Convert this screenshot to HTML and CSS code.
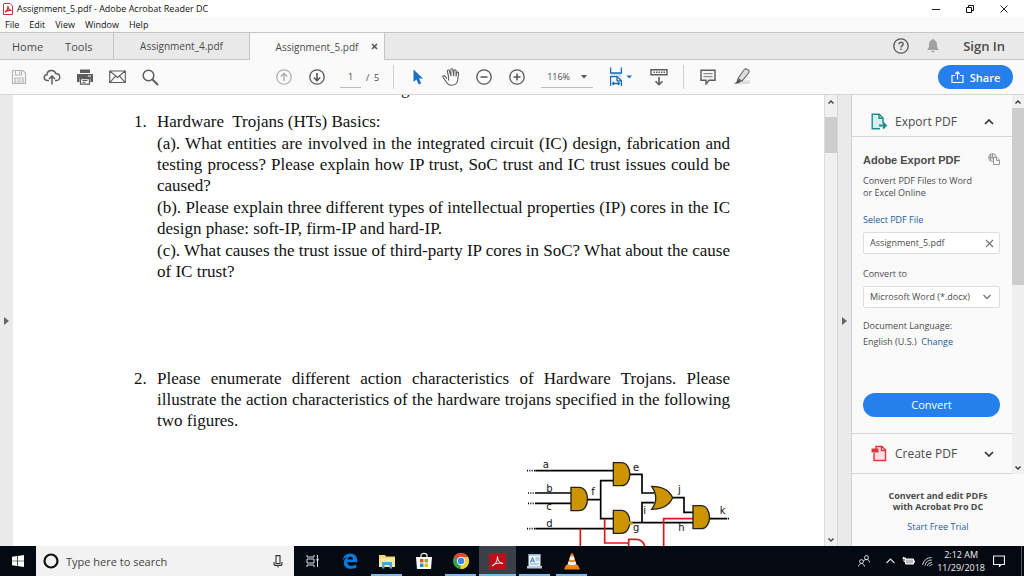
FILE: index.html
```
<!DOCTYPE html>
<html lang="en">
<head>
<meta charset="UTF-8">
<meta name="viewport" content="width=device-width, initial-scale=1.0">
<title>Assignment_5.pdf - Adobe Acrobat Reader DC</title>
<link rel="stylesheet" href="styles.css">
</head>
<body>
    <header class="titlebar">
        <svg class="app-icon" width="10" height="12" viewBox="0 0 10 12"><path d="M1 .5h6L9.500 3v8.500h-9V1z" fill="#fff" stroke="#c8343a"/><path d="M2 9c2-1 3-3 3-6 0 3 1 4 3.500 4.500C6 7 4 7.500 2 9z" fill="none" stroke="#d2232a" stroke-width="1.200"/></svg>
        <span class="title">Assignment_5.pdf - Adobe Acrobat Reader DC</span>
        <div class="window-buttons">
            <button aria-label="Minimize"><svg width="10" height="10" viewBox="0 0 10 10"><path d="M1 5.500h8" stroke="#222"/></svg></button>
            <button aria-label="Restore"><svg width="10" height="10" viewBox="0 0 10 10"><path d="M1.500 3.500h5v5h-5zM3.500 3V1.500h5v5H7" fill="none" stroke="#111"/></svg></button>
            <button aria-label="Close"><svg width="10" height="10" viewBox="0 0 10 10"><path d="M1.500 1.500l7 7M8.500 1.500l-7 7" stroke="#222"/></svg></button>
        </div>
    </header>

    <nav class="menubar">
        <button>File</button>
        <button>Edit</button>
        <button>View</button>
        <button>Window</button>
        <button>Help</button>
    </nav>

    <nav class="tabbar">
        <div class="main-tabs">
            <button>Home</button>
            <button>Tools</button>
        </div>
        <button class="tab">Assignment_4.pdf</button>
        <div class="tab active">
            <span>Assignment_5.pdf</span>
            <button class="tab-close" aria-label="Close tab"><svg width="7" height="7" viewBox="0 0 7 7"><path d="M1 1l5 5M6 1L1 6" stroke="#555" stroke-width="1.600"/></svg></button>
        </div>
        <div class="account">
            <button aria-label="Help"><svg width="16" height="16" viewBox="0 0 16 16"><circle cx="8" cy="8" r="7.200" fill="none" stroke="#555" stroke-width="1.300"/><path d="M6 6.300c0-2.600 4.200-2.600 4.200-.2C10.200 7.700 8 7.600 8 9.500M8 10.600v1.500" fill="none" stroke="#555" stroke-width="1.400"/></svg></button>
            <button aria-label="Notifications"><svg width="14" height="16" viewBox="0 0 14 16"><path d="M7 1c.8 0 1 .6 1 1 2.400.6 3 2.500 3 4.500 0 3 .6 4.200 2 5.500H1c1.400-1.300 2-2.500 2-5.500 0-2 .6-3.900 3-4.500 0-.4.200-1 1-1zM5.200 13h3.600c-.2 1.700-3.400 1.700-3.600 0z" fill="#a0a0a0"/></svg></button>
            <button class="sign-in">Sign In</button>
        </div>
    </nav>

    <div class="toolbar">
        <div class="tools files">
            <button aria-label="Save"><svg width="16" height="16" viewBox="0 0 16 16"><path d="M1.500 1.500h10.500l2.500 2.500v10.500h-13zM4.500 1.500v4.500h6V1.500M8.500 2.500v2.500M4 14.500V9h8v5.500M5.500 11h5M5.500 13h5" fill="none" stroke="#b4b4b4" stroke-width="1.200"/></svg></button>
            <button aria-label="Upload"><svg width="18" height="16" viewBox="0 0 18 16"><path d="M6 11.500H4.500C.2 11.500.2 6 4 5.800 4 .8 11.500-.2 12.700 4.500c5.200 0 5.300 7 .8 7H12" fill="none" stroke="#5c5c5c" stroke-width="1.400"/><path d="M9 15.500V7.500M6 10l3-3 3 3" fill="none" stroke="#5c5c5c" stroke-width="1.500"/></svg></button>
            <button aria-label="Print"><svg width="18" height="16" viewBox="0 0 18 16"><path d="M4 .5h10V4H4zM1 5h16v8h-2.500V9.500h-11V13H1z" fill="#5c5c5c"/><path d="M4.500 9.700h9v5.500h-9z" fill="#fff" stroke="#5c5c5c" stroke-width="1.300"/><path d="M6.500 11.500h5M6.500 13.300h3" stroke="#5c5c5c"/><path d="M12 7h3" stroke="#fff"/></svg></button>
            <button aria-label="Email"><svg width="17" height="14" viewBox="0 0 17 14"><path d="M.7 1h15.600v11.500H.7zM1 1.200l7.500 6.300L16 1.200M1 12.300l5.500-6.200M16 12.300l-5.500-6.200" fill="none" stroke="#5c5c5c" stroke-width="1.100"/></svg></button>
            <button aria-label="Search"><svg width="17" height="17" viewBox="0 0 17 17"><circle cx="6.500" cy="6.500" r="5.300" fill="none" stroke="#5c5c5c" stroke-width="1.500"/><path d="M10.500 10.500l5.500 5.500" stroke="#5c5c5c" stroke-width="2"/></svg></button>
        </div>
        <div class="tools">
            <button aria-label="Previous page"><svg width="16" height="16" viewBox="0 0 16 16"><path d="M8 12V4.500M4.800 7.500L8 4.300l3.200 3.200" fill="none" stroke="#b0b0b0" stroke-width="1.500"/><circle cx="8" cy="8" r="7.200" fill="none" stroke="#b0b0b0" stroke-width="1.300"/></svg></button>
            <button aria-label="Next page"><svg width="16" height="16" viewBox="0 0 16 16"><path d="M8 4v7.500M4.800 8.500L8 11.700l3.200-3.200" fill="none" stroke="#555" stroke-width="1.600"/><circle cx="8" cy="8" r="7.200" fill="none" stroke="#555" stroke-width="1.300"/></svg></button>
        </div>
        <label class="pager"><input type="text" value="1" aria-label="Page number"><span>/&nbsp; 5</span></label>
        <div class="tools divided">
            <button aria-label="Select"><svg width="12" height="16" viewBox="0 0 12 16"><path d="M1.500.5v12.500l3-2.600 2.200 5 2.500-1.200-2.200-4.600h4z" fill="#1a6fc9"/></svg></button>
            <button aria-label="Pan"><svg width="18" height="18" viewBox="0 0 18 18"><path d="M5 10.500L2.800 8.200C1.600 7 .3 8.200 1.200 9.500l4 5.700c1 1.400 2.300 2 4.300 2 3.800 0 5.800-2 6.200-5.200l.9-6.500c.2-1.600-1.700-1.900-2-.4L14 8.500l.1-5.500c0-1.700-2-1.700-2.100 0l-.4 5L11 2c0-1.600-2.200-1.600-2.100 0V8L7.500 3c-.4-1.600-2.400-1.200-2.100.4L6.600 9v3.500" fill="#fff" stroke="#5c5c5c" stroke-width="1.100"/></svg></button>
            <button aria-label="Zoom out"><svg width="16" height="16" viewBox="0 0 16 16"><circle cx="8" cy="8" r="7.200" fill="none" stroke="#555" stroke-width="1.300"/><path d="M4.500 8h7" stroke="#555" stroke-width="1.500"/></svg></button>
            <button aria-label="Zoom in"><svg width="16" height="16" viewBox="0 0 16 16"><circle cx="8" cy="8" r="7.200" fill="none" stroke="#555" stroke-width="1.300"/><path d="M4.500 8h7M8 4.500v7" stroke="#555" stroke-width="1.500"/></svg></button>
        </div>
        <label class="zoom">
            <select aria-label="Zoom level"><option>116%</option></select>
            <svg width="6" height="4" viewBox="0 0 6 4"><path d="M0 0h6L3 3.500z" fill="#555"/></svg>
        </label>
        <button class="fit" aria-label="Fit width"><svg width="24" height="20" viewBox="0 0 24 20"><path d="M2.600 6h10.800v3.600H2.600z" fill="#c5dcf0"/><path d="M2.600.5v5.500h10.800V.5M2.600 19V9.600h6.500l4.300 4V19M9 9.600v4.200h4.400M4.500 16.500h7M6 15l-1.500 1.500L6 18M10 15l1.500 1.500L10 18" fill="none" stroke="#1b6cb8" stroke-width="1.300"/><path d="M18.500 8.500h5.500l-2.750 3z" fill="#1b6cb8"/></svg></button>
        <div class="tools">
            <button aria-label="Scroll mode"><svg width="18" height="18" viewBox="0 0 18 18"><path d="M1 1.700h16v5H1z" fill="#fff" stroke="#5c5c5c" stroke-width="1.400"/><path d="M3.500 4.200h11.500" stroke="#5c5c5c" stroke-width="1.500" stroke-dasharray="1.500 1"/><path d="M9 9v7.500M5.500 13.200L9 16.700l3.500-3.500" fill="none" stroke="#5c5c5c" stroke-width="1.600"/></svg></button>
        </div>
        <div class="tools divided">
            <button aria-label="Comment"><svg width="16" height="16" viewBox="0 0 16 16"><path d="M1 1.200h14v10H9L6 15v-3.800H1z" fill="#f4f4f4" stroke="#5c5c5c" stroke-width="1.400"/><path d="M3.500 4.700h9M3.500 7.700h9" stroke="#777"/></svg></button>
            <button aria-label="Highlight"><svg width="18" height="18" viewBox="0 0 18 18"><path d="M7 12.500h11v3.500H4z" fill="#ddd"/><path d="M14.500 1l2.500 1.500c.5 1-.2 2-.8 3L10 13l-4-2.500L11.500 2.500C12.300 1.200 13.500.6 14.500 1z" fill="#ddd" stroke="#666" stroke-width="1.100"/><path d="M5.500 10.700l4 2.600-3 2-4.500.7 2.500-2.200z" fill="#555"/></svg></button>
        </div>
        <button class="pill share"><svg width="13" height="12" viewBox="0 0 13 12"><path d="M4 4.500H1v7h11v-7H9M6.500 8.500V1M4.300 3l2.200-2.200L8.700 3" fill="none" stroke="#fff" stroke-width="1.200"/></svg>Share</button>
    </div>

    <main class="workspace">
        <button class="gutter" aria-label="Open navigation pane"><svg width="5" height="8" viewBox="0 0 5 8"><path d="M0 0l5 4-5 4z" fill="#666"/></svg></button>

        <article class="page">
            <p class="previous-line">g</p>
            <section class="question">
                <span class="number">1.</span>
                <div class="answer">
                    <p>Hardware&nbsp; Trojans (HTs) Basics:</p>
                    <p>(a). What entities are involved in the integrated circuit (IC) design, fabrication and testing process? Please explain how IP trust, SoC trust and IC trust issues could be caused?</p>
                    <p>(b). Please explain three different types of intellectual properties (IP) cores in the IC design phase: soft-IP, firm-IP and hard-IP.</p>
                    <p>(c). What causes the trust issue of third-party IP cores in SoC? What about the cause of IC trust?</p>
                </div>
            </section>
            <section class="question">
                <span class="number">2.</span>
                <div class="answer">
                    <p>Please enumerate different action characteristics of Hardware Trojans. Please illustrate the action characteristics of the hardware trojans specified in the following two figures.</p>
                </div>
            </section>

            <svg class="circuit" width="210" height="90" viewBox="45 21 630 270">
                <g fill="none" stroke="#000" stroke-width="5">
                    <path d="M76 62H310M78 129H184M78 160H184M76 236H310M232 149H272M310 92H272V206H310M360 73H396V129H432M366 218H550M396 218V158H432M488 143H522V187H550M598 206H652"/>
                    <path d="M51 62H76M54 129H78M54 160H78M51 236H76M654 206H660" stroke-dasharray="3 4"/>
                </g>
                <g fill="none" stroke="#e3131b" stroke-width="5">
                    <path d="M211 236V291M284 206V279H356M461 291V206H550"/>
                    <path d="M356 291V268H378C394 268 402 278 405 291" fill="#fff"/>
                </g>
                <g fill="#cc9400" stroke="#222" stroke-width="4">
                    <path d="M310 38H334C368 38 368 107 334 107H310z"/>
                    <path d="M183 112H207C241 112 241 182 207 182H183z"/>
                    <path d="M310 181H334C368 181 368 250 334 250H310z"/>
                    <path d="M549 167H573C607 167 607 236 573 236H549z"/>
                    <path d="M425 109C459 109 478 121 488 143C478 165 459 178 425 178C441 156 441 132 425 109z"/>
                    <circle cx="362" cy="219" r="4" stroke="#cc9400"/>
                </g>
                <g class="wire-names">
                    <text x="98" y="55">a</text>
                    <text x="109" y="126">b</text>
                    <text x="109" y="179">c</text>
                    <text x="109" y="230">d</text>
                    <text x="369" y="64">e</text>
                    <text x="244" y="136">f</text>
                    <text x="369" y="243">g</text>
                    <text x="505" y="244">h</text>
                    <text x="400" y="193">i</text>
                    <text x="504" y="128">j</text>
                    <text x="629" y="191">k</text>
                </g>
            </svg>
        </article>

        <div class="scrollbar page-scroll">
            <svg width="6" height="4" viewBox="0 0 6 4"><path d="M.5 3.500L3 1l2.500 2.500" fill="none" stroke="#444" stroke-width="1.400"/></svg>
            <div class="thumb"></div>
            <svg width="6" height="4" viewBox="0 0 6 4"><path d="M.5.5L3 3 5.500.5" fill="none" stroke="#444" stroke-width="1.400"/></svg>
        </div>

        <button class="gutter right" aria-label="Hide tools pane"><svg width="5" height="8" viewBox="0 0 5 8"><path d="M0 0l5 4-5 4z" fill="#666"/></svg></button>

        <aside class="panel">
            <div class="panel-top">
                <div class="panel-tools">
                    <button class="tool-header">
                        <svg width="16" height="17" viewBox="0 0 16 17"><path d="M9 15.800H1.200V1.200h7L12 5v5" fill="#d7efee" stroke="#1b8d8b" stroke-width="1.400"/><path d="M8 1.200V5.200h4" fill="none" stroke="#1b8d8b" stroke-width="1.400"/><path d="M8 12.500h6.500M12 9.500l3 3-3 3" fill="none" stroke="#1b8d8b" stroke-width="1.800"/></svg>
                        <span>Export PDF</span>
                        <svg width="10" height="6" viewBox="0 0 10 6"><path d="M1 5l4-4 4 4" fill="none" stroke="#333" stroke-width="1.700"/></svg>
                    </button>
                    <form class="export">
                        <h2>Adobe Export PDF
                            <svg width="12" height="12" viewBox="0 0 12 12"><circle cx="4.500" cy="4.500" r="4" fill="#ddd" stroke="#aaa"/><path d="M2.500 1v7M.5 4.500h5M4.500.5v5" stroke="#999"/><path d="M5.500 4.500h3.500l2.500 2.500v4.500h-6z" fill="#fff" stroke="#999"/><path d="M8.500 4.500V7.500h3" fill="none" stroke="#999"/></svg>
                        </h2>
                        <p class="about">Convert PDF Files to Word<br>or Excel Online</p>
                        <a class="select-file" href="#">Select PDF File</a>
                        <div class="field file">
                            <span>Assignment_5.pdf</span>
                            <button type="button" aria-label="Remove file"><svg width="9" height="9" viewBox="0 0 9 9"><path d="M1 1l7 7M8 1L1 8" stroke="#777" stroke-width="1.200"/></svg></button>
                        </div>
                        <label for="format">Convert to</label>
                        <div class="field">
                            <select id="format"><option>Microsoft Word (*.docx)</option></select>
                            <svg width="8" height="6" viewBox="0 0 8 6"><path d="M.5 1L4 4.500 7.500 1" fill="none" stroke="#777" stroke-width="1.300"/></svg>
                        </div>
                        <p class="language">Document Language:<br>English (U.S.)&nbsp; <a href="#">Change</a></p>
                        <button type="button" class="pill convert">Convert</button>
                    </form>
                    <button class="tool-header create">
                        <svg width="16" height="17" viewBox="0 0 16 17"><path d="M3 8v7.500h11.500V5L11 1.500H5V4" fill="#fbe0e1" stroke="#d9363e" stroke-width="1.400"/><path d="M10.500 1.500v4h4" fill="none" stroke="#d9363e" stroke-width="1.400"/><path d="M.5 3.500h7v4h-7z" fill="#d9363e"/></svg>
                        <span>Create PDF</span>
                        <svg width="10" height="6" viewBox="0 0 10 6"><path d="M1 1l4 4 4-4" fill="none" stroke="#333" stroke-width="1.700"/></svg>
                    </button>
                </div>
                <div class="scrollbar panel-scroll">
                    <svg width="6" height="4" viewBox="0 0 6 4"><path d="M.5 3.500L3 1l2.500 2.500" fill="none" stroke="#333" stroke-width="1.400"/></svg>
                    <div class="thumb"></div>
                    <svg width="6" height="4" viewBox="0 0 6 4"><path d="M.5.5L3 3 5.500.5" fill="none" stroke="#333" stroke-width="1.400"/></svg>
                </div>
            </div>
            <div class="promo">
                <strong>Convert and edit PDFs<br>with Acrobat Pro DC</strong>
                <a href="#">Start Free Trial</a>
            </div>
        </aside>
    </main>

    <footer class="taskbar">
        <button class="start" aria-label="Start"><svg width="12" height="12" viewBox="0 0 12 12"><path d="M0 1.700l5-.7v4.700H0zM5.700.9L12 0v5.700H5.700zM0 6.300h5V11l-5-.7zM5.700 6.300H12V12l-6.300-.9z" fill="#fff"/></svg></button>
        <div class="search">
            <svg width="16" height="16" viewBox="0 0 16 16"><circle cx="8" cy="8" r="6.500" fill="none" stroke="#111" stroke-width="2.200"/></svg>
            <input type="text" placeholder="Type here to search" aria-label="Search">
            <svg width="10" height="13" viewBox="0 0 10 13"><path d="M3 .6h4v8H3zM1 7v1.500c0 1.300.8 2 2 2h4c1.200 0 2-.7 2-2V7M5 10.500v2" fill="none" stroke="#333" stroke-width="1.100"/></svg>
        </div>
        <div class="apps">
            <button aria-label="Task View"><svg width="13" height="12" viewBox="0 0 13 12"><path d="M1 0v2h7V0M1 12v-2h7v2M1 4h7v4H1zM11.500 0v3M11.500 5v7" fill="none" stroke="#ddd"/><path d="M10.500 3.500h2v2h-2z" fill="#fff"/></svg></button>
            <button aria-label="Edge"><svg width="16" height="16" viewBox="0 0 16 16"><path d="M.7 7.500C1.200 3 4.500.5 8.300.5c4.500 0 7 3 7 7v1.800H5.300c.2 4.200 5.200 4.400 9 2.200v3.200c-5.500 2.500-12.500 1-12.500-5C1.800 7 3.500 5 5.800 4 3.800 4.300 1.800 5.500.7 7.500zM5.500 6.500h5.600c0-3.800-5.200-3.800-5.600 0z" fill="#0c79d8"/></svg></button>
            <button class="open" aria-label="File Explorer"><svg width="16" height="15" viewBox="0 0 16 15"><path d="M0 1h6l1 1.500h9V12H0z" fill="#f4d774"/><path d="M0 4h16v9H0z" fill="#fbe79b"/><path d="M3 14.500V8h10v6.500h-2.500V11h-5v3.500z" fill="#46a7dd"/></svg></button>
            <button aria-label="Store"><svg width="18" height="18" viewBox="0 0 18 18"><path d="M6 5V3.500c0-2.800 6-2.800 6 0V5" fill="none" stroke="#eee" stroke-width="1.200"/><path d="M1 5h16l-1 12H2z" fill="#fff"/><path d="M5 7h3.500v3.500H5z" fill="#e8502b"/><path d="M9.500 7H13v3.500H9.500z" fill="#80b928"/><path d="M5 11.500h3.500V15H5z" fill="#159bd8"/><path d="M9.500 11.500H13V15H9.500z" fill="#f5b51c"/></svg></button>
            <button class="open" aria-label="Chrome"><svg width="18" height="18" viewBox="0 0 18 18"><circle cx="9" cy="9" r="8" fill="#32a350"/><path d="M9 9L2 5A8 8 0 0 1 16 5z" fill="#e24436"/><path d="M9 9V5h7A8 8 0 0 1 8.500 17z" fill="#fbcd32"/><circle cx="9" cy="9" r="4.200" fill="#fff"/><circle cx="9" cy="9" r="3.300" fill="#4382ee"/></svg></button>
            <button class="open current" aria-label="Acrobat Reader"><svg width="17" height="17" viewBox="0 0 17 17"><path d="M0 0h17v17H0z" fill="#b9101a"/><path d="M3 13c3.500-1.700 5.500-5 5.500-9.500C8.500 7.500 10.500 10 14 10.500 10 9.300 6 10.500 3 13z" fill="none" stroke="#fff"/></svg></button>
            <button class="open" aria-label="WordPad"><svg width="15" height="16" viewBox="0 0 15 16"><path d="M1.500 1h12v12h-12z" fill="#e9f3fa"/><path d="M1.500 1h12v1.500h-12z" fill="#86b9dc"/><path d="M3.500 9.500l2-5 2 5M4.500 8h2" fill="none" stroke="#356fb0"/><path d="M8.500 5h4M8.500 7h4M3 11h9" stroke="#7ea8cc"/><path d="M0 13h15v2.500H0z" fill="#bccbd8"/></svg></button>
            <button class="open" aria-label="VLC"><svg width="16" height="17" viewBox="0 0 16 17"><path d="M2 12h12l2 4.500H0z" fill="#ef8014"/><path d="M7 .5h2L13 13c-2 1.700-8 1.700-10 0z" fill="#f18a1e"/><path d="M6.200 3.500h3.600l.9 3c-1 .8-4.400.8-5.400 0zM4.600 8.500c1.500 1 5.300 1 6.800 0l.8 2.500c-2 1.300-6.400 1.300-8.400 0z" fill="#f3f3f3"/></svg></button>
        </div>
        <div class="tray">
            <svg width="12" height="12" viewBox="0 0 12 12"><path d="M.6 11.500c0-4 5.800-4 5.800 0M5.500 6.500c.5-3 5.900-3 5.900 1" fill="none" stroke="#ddd"/><circle cx="3.500" cy="6.500" r="1.900" fill="none" stroke="#ddd"/><circle cx="8.500" cy="2.700" r="2" fill="none" stroke="#ddd"/></svg>
            <svg class="more" width="9" height="6" viewBox="0 0 9 6"><path d="M.5 5l4-4 4 4" fill="none" stroke="#ddd" stroke-width="1.200"/></svg>
            <svg width="13" height="10" viewBox="0 0 13 10"><path d="M3.500 3h8v5h-8z" fill="#bbb" stroke="#fff"/><path d="M12.500 4.500v2M.5 2.500h3M1.500 1v1.500M3 1v1.500M2 3v2.500h1.500" fill="none" stroke="#fff"/></svg>
            <svg width="11" height="11" viewBox="0 0 11 11"><path d="M.5 9A9 9 0 0 1 9.500 1.500M3 9.500A7 7 0 0 1 10 4M5 10a5 5 0 0 1 5-3.500M7.500 10.500A3 3 0 0 1 10.500 8.500" fill="none" stroke="#ccc"/></svg>
            <time>2:12 AM<br>11/29/2018</time>
            <svg class="action-center" width="12" height="12" viewBox="0 0 12 12"><path d="M.5 1h11v8.500H8L6.500 11.300V9.500h-6z" fill="none" stroke="#eee" stroke-width="1.200"/></svg>
        </div>
    </footer>
</body>
</html>
```
FILE: styles.css
```
* {
    box-sizing: border-box;
}
html, body {
    height: 100%;
}
body {
    margin: 0;
    display: flex;
    flex-direction: column;
    overflow: hidden;
    font-family: "Open Sans", "Noto Sans", sans-serif;
    font-size: 9px;
    color: #4b4b4b;
    background: #fafafa;
}
button, input, select {
    margin: 0;
    padding: 0;
    border: 0;
    border-radius: 0;
    background: none;
    font: inherit;
    color: inherit;
    appearance: none;
    outline: none;
}
button {
    display: flex;
    align-items: center;
    justify-content: center;
}
svg {
    display: block;
    flex: none;
}
p, h2 {
    margin: 0;
}
a {
    color: #1d5c9c;
    text-decoration: none;
}

/* window chrome */
.titlebar {
    flex: none;
    display: flex;
    align-items: center;
    height: 17px;
    padding: 0 3px;
    background: #fff;
    color: #111;
}
.title {
    margin-left: 4px;
}
.window-buttons {
    display: flex;
    margin-left: auto;
}
.window-buttons button {
    width: 34px;
    height: 16px;
}
.menubar {
    flex: none;
    display: flex;
    gap: 10px;
    height: 15px;
    padding-left: 5px;
    color: #111;
}
.tabbar {
    flex: none;
    display: flex;
    height: 28px;
    background: #e9e9e9;
    border-top: 1px solid #c6c6c6;
    border-bottom: 1px solid #c6c6c6;
    font-size: 10px;
}
.main-tabs {
    display: flex;
    gap: 22px;
    width: 113px;
    padding-left: 12px;
    font-size: 11px;
}
.tab {
    display: flex;
    align-items: center;
    justify-content: center;
    width: 136px;
    border-left: 1px solid #c6c6c6;
}
.tab.active {
    height: 27px;
    gap: 13px;
    padding-left: 20px;
    border-right: 1px solid #c6c6c6;
    background: #fafafa;
}
.account {
    display: flex;
    margin-left: auto;
    padding-right: 19px;
    gap: 17px;
}
.sign-in {
    margin-left: 6px;
    font-size: 13px;
    font-weight: 600;
}

/* toolbar */
.toolbar {
    flex: none;
    display: flex;
    align-items: center;
    height: 35px;
    padding: 0 11px 0 2px;
    border-bottom: 1px solid #d6d6d6;
}
.tools {
    display: flex;
}
.tools button {
    width: 33px;
    height: 24px;
}
.files {
    margin-right: 100px;
}
.divided {
    margin-left: 8px;
    padding-left: 7px;
    border-left: 1px solid #cfcfcf;
}
.pager {
    display: flex;
    align-items: center;
    gap: 5px;
    margin: 0 6px 0 7px;
}
.pager input {
    width: 21px;
    height: 21px;
    border-bottom: 1px solid #c0c0c0;
    text-align: center;
}
.zoom {
    display: flex;
    align-items: center;
    width: 52px;
    height: 21px;
    margin-left: 8px;
    padding: 0 6px;
    border-bottom: 1px solid #c0c0c0;
}
.zoom select {
    flex: 1;
}
.fit {
    margin: 0 10px 0 15px;
}
.pill {
    height: 24px;
    border-radius: 12px;
    background: #2680eb;
    color: #fff;
    font-size: 11px;
}
.share {
    gap: 6px;
    width: 75px;
    margin-left: auto;
    font-weight: 600;
}

/* document */
.workspace {
    flex: 1;
    display: flex;
    min-height: 0;
}
.gutter {
    width: 13px;
    background: #eaeaea;
}
.gutter.right {
    width: 14px;
    border-left: 1px solid #d6d6d6;
}
.page {
    flex: 1;
    overflow: hidden;
    padding: 0 94px 0 121px;
    background: #fff;
    color: #111;
    font-family: "Liberation Serif", serif;
    font-size: 17px;
    line-height: 21px;
}
.previous-line {
    margin: -17px 0 12px;
    padding-left: 267px;
}
.question {
    display: flex;
    margin-bottom: 86px;
}
.number {
    flex: none;
    width: 23px;
}
.answer {
    flex: 1;
    display: grid;
    gap: 1px;
    text-align: justify;
}
.question + .question {
    margin-bottom: 26px;
}
.circuit {
    margin-left: 391px;
}
.wire-names {
    font-family: "DejaVu Sans", sans-serif;
    font-size: 30px;
    fill: #111;
}
.scrollbar {
    flex: none;
    display: flex;
    flex-direction: column;
    align-items: center;
    background: #f0f0f0;
}
.scrollbar .thumb {
    width: 100%;
    margin-bottom: auto;
    background: #cdcdcd;
}
.page-scroll {
    width: 13px;
    padding: 5px 0 4px;
    border-left: 1px solid #dcdcdc;
}
.page-scroll .thumb {
    height: 36px;
    margin-top: 13px;
}

/* tools pane */
.panel {
    flex: none;
    display: flex;
    flex-direction: column;
    width: 173px;
    border-left: 1px solid #d0d0d0;
}
.panel-top {
    display: flex;
}
.panel-tools {
    flex: 1;
}
.panel-scroll {
    width: 12px;
    padding: 5px 0 4px;
}
.panel-scroll .thumb {
    height: 177px;
    margin-top: 4px;
}
.tool-header {
    width: 100%;
    height: 42px;
    gap: 8px;
    padding: 12px 18px 0 19px;
    border-bottom: 1px solid #d6d6d6;
    font-size: 12px;
}
.tool-header span {
    flex: 1;
    text-align: left;
}
.create {
    height: 41px;
    padding-top: 0;
    border-top: 1px solid #d6d6d6;
}
.export {
    display: flex;
    flex-direction: column;
    padding: 16px 12px 16px 11px;
    line-height: 12px;
}
.export h2 {
    display: flex;
    justify-content: space-between;
    font-family: "Liberation Sans", sans-serif;
    font-size: 11px;
    line-height: 14px;
}
.about {
    margin: 8px 0 15px;
}
.field {
    display: flex;
    align-items: center;
    justify-content: space-between;
    height: 22px;
    margin: 6px 0 14px;
    padding: 0 8px 0 6px;
    border: 1px solid #dedede;
    border-radius: 2px;
    background: #fff;
}
.field select {
    flex: 1;
}
.file {
    padding-right: 5px;
}
.language {
    margin-top: -4px;
    line-height: 16px;
}
.convert {
    margin-top: 43px;
    font-size: 11px;
}
.promo {
    display: flex;
    flex-direction: column;
    align-items: center;
    gap: 9px;
    padding-top: 16px;
    line-height: 11px;
    text-align: center;
}

/* taskbar */
.taskbar {
    flex: none;
    display: flex;
    height: 30px;
    background: #050a12;
    color: #eee;
}
.start {
    width: 36px;
}
.search {
    display: flex;
    align-items: center;
    width: 258px;
    padding: 0 11px 0 7px;
    background: #f2f2f2;
}
.search input {
    flex: 1;
    margin-left: 7px;
    font-size: 11px;
}
.search input::placeholder {
    color: #444;
}
.apps {
    display: flex;
}
.apps button {
    width: 31px;
    margin: 0 3px;
    border-top: 2px solid transparent;
    border-bottom: 2px solid transparent;
}
.apps .open {
    border-bottom-color: #76b9ed;
}
.apps .current {
    width: 37px;
    margin: 0;
    background: #3b4048;
    border-top-color: #3b4048;
}
.tray {
    display: flex;
    align-items: center;
    gap: 7px;
    margin-left: auto;
    margin-right: 2px;
    padding-right: 16px;
    border-right: 1px solid #555;
}
.tray .more {
    margin-left: 9px;
}
.tray time {
    margin-left: -3px;
    line-height: 13px;
    text-align: center;
}
.tray .action-center {
    margin-left: 1px;
}
```
